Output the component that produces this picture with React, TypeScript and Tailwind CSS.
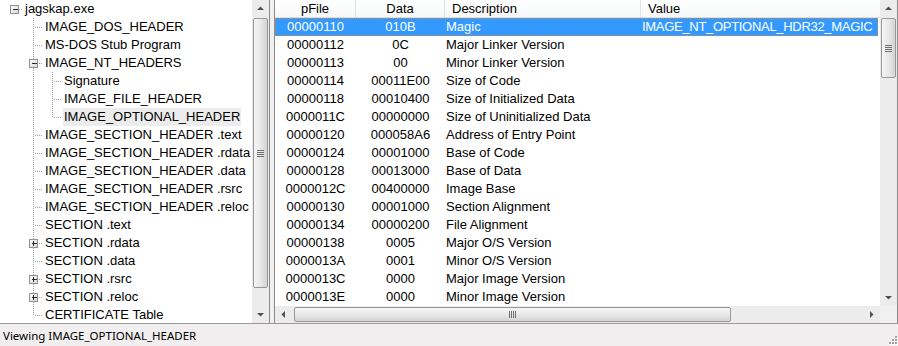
import React from 'react';

type Node = { label: string; level: 0 | 1 | 2; box?: 'minus' | 'plus'; last?: boolean; selected?: boolean };

const tree: Node[] = [
  { label: 'jagskap.exe', level: 0, box: 'minus' },
  { label: 'IMAGE_DOS_HEADER', level: 1 },
  { label: 'MS-DOS Stub Program', level: 1 },
  { label: 'IMAGE_NT_HEADERS', level: 1, box: 'minus' },
  { label: 'Signature', level: 2 },
  { label: 'IMAGE_FILE_HEADER', level: 2 },
  { label: 'IMAGE_OPTIONAL_HEADER', level: 2, last: true, selected: true },
  { label: 'IMAGE_SECTION_HEADER .text', level: 1 },
  { label: 'IMAGE_SECTION_HEADER .rdata', level: 1 },
  { label: 'IMAGE_SECTION_HEADER .data', level: 1 },
  { label: 'IMAGE_SECTION_HEADER .rsrc', level: 1 },
  { label: 'IMAGE_SECTION_HEADER .reloc', level: 1 },
  { label: 'SECTION .text', level: 1 },
  { label: 'SECTION .rdata', level: 1, box: 'plus' },
  { label: 'SECTION .data', level: 1 },
  { label: 'SECTION .rsrc', level: 1, box: 'plus' },
  { label: 'SECTION .reloc', level: 1, box: 'plus' },
  { label: 'CERTIFICATE Table', level: 1, last: true },
];

const rows = [
  ['00000110', '010B', 'Magic', 'IMAGE_NT_OPTIONAL_HDR32_MAGIC'],
  ['00000112', '0C', 'Major Linker Version', ''],
  ['00000113', '00', 'Minor Linker Version', ''],
  ['00000114', '00011E00', 'Size of Code', ''],
  ['00000118', '00010400', 'Size of Initialized Data', ''],
  ['0000011C', '00000000', 'Size of Uninitialized Data', ''],
  ['00000120', '000058A6', 'Address of Entry Point', ''],
  ['00000124', '00001000', 'Base of Code', ''],
  ['00000128', '00013000', 'Base of Data', ''],
  ['0000012C', '00400000', 'Image Base', ''],
  ['00000130', '00001000', 'Section Alignment', ''],
  ['00000134', '00000200', 'File Alignment', ''],
  ['00000138', '0005', 'Major O/S Version', ''],
  ['0000013A', '0001', 'Minor O/S Version', ''],
  ['0000013C', '0000', 'Major Image Version', ''],
  ['0000013E', '0000', 'Minor Image Version', ''],
];

const DOT = '#a0a0a0';

function ExpandBox({ cx, kind }: { cx: number; kind: 'minus' | 'plus' }) {
  return (
    <g>
      <defs>
        <linearGradient id="bx" x1="0" y1="0" x2="1" y2="1">
          <stop offset="0" stopColor="#ffffff" />
          <stop offset="1" stopColor="#d6d6d6" />
        </linearGradient>
      </defs>
      <rect x={cx - 3.5} y={5.5} width={8} height={8} fill="url(#bx)" stroke="#919191" />
      <line x1={cx - 1} y1={9.5} x2={cx + 4} y2={9.5} stroke="#2b2b2b" />
      {kind === 'plus' && <line x1={cx + 0.5} y1={7} x2={cx + 0.5} y2={12} stroke="#2b2b2b" />}
    </g>
  );
}

// tree connector lines for one row
function Gutter({ node }: { node: Node }) {
  const w = [23, 43, 62][node.level];
  return (
    <svg width={w} height={18} className="shrink-0">
      {node.level === 0 && (
        <>
          <line x1={19} y1={9.5} x2={23} y2={9.5} stroke={DOT} strokeDasharray="1 1" />
          {node.box && <ExpandBox cx={14} kind={node.box} />}
        </>
      )}
      {node.level === 1 && (
        <>
          <line x1={33.5} y1={0} x2={33.5} y2={node.last ? 10 : 18} stroke={DOT} strokeDasharray="1 1" />
          <line x1={35} y1={9.5} x2={43} y2={9.5} stroke={DOT} strokeDasharray="1 1" />
          {node.box && <ExpandBox cx={33} kind={node.box} />}
        </>
      )}
      {node.level === 2 && (
        <>
          <line x1={33.5} y1={0} x2={33.5} y2={18} stroke={DOT} strokeDasharray="1 1" />
          <line x1={52.5} y1={0} x2={52.5} y2={node.last ? 10 : 18} stroke={DOT} strokeDasharray="1 1" />
          <line x1={54} y1={9.5} x2={62} y2={9.5} stroke={DOT} strokeDasharray="1 1" />
        </>
      )}
    </svg>
  );
}

function Arrow({ dir }: { dir: 'up' | 'down' | 'left' | 'right' }) {
  const pts = {
    up: '1,5 8,5 4.5,1.5',
    down: '1,2 8,2 4.5,5.5',
    left: '5,1 5,8 1.5,4.5',
    right: '2,1 2,8 5.5,4.5',
  }[dir];
  const vert = dir === 'up' || dir === 'down';
  return (
    <svg width={vert ? 9 : 7} height={vert ? 7 : 9}>
      <polygon points={pts} fill="#505050" />
    </svg>
  );
}

function VGrip() {
  return (
    <div className="flex flex-col gap-[1px]">
      <div className="w-[7px] h-[1px] bg-[#6f6f6f]" />
      <div className="w-[7px] h-[1px] bg-[#6f6f6f]" />
      <div className="w-[7px] h-[1px] bg-[#6f6f6f]" />
      <div className="w-[7px] h-[1px] bg-[#6f6f6f]" />
    </div>
  );
}

function HGrip() {
  return (
    <div className="flex gap-[1px]">
      <div className="h-[7px] w-[1px] bg-[#6f6f6f]" />
      <div className="h-[7px] w-[1px] bg-[#6f6f6f]" />
      <div className="h-[7px] w-[1px] bg-[#6f6f6f]" />
      <div className="h-[7px] w-[1px] bg-[#6f6f6f]" />
    </div>
  );
}

function TreeScroll() {
  return (
    <div className="w-[17px] h-full flex flex-col bg-[#ececec]">
      <div className="h-[17px] flex items-center justify-center"><Arrow dir="up" /></div>
      <div className="flex-1 pt-[1px]">
        <div className="h-[270px] mx-[1px] rounded-[2px] border border-[#979797] bg-linear-to-r from-[#f5f5f5] via-[#e8e8e8] to-[#d4d4d4] flex items-center justify-center">
          <VGrip />
        </div>
      </div>
      <div className="h-[17px] flex items-center justify-center"><Arrow dir="down" /></div>
    </div>
  );
}

function ListVScroll() {
  return (
    <div className="w-[17px] h-full flex flex-col bg-[#ececec]">
      <div className="h-[17px] flex items-center justify-center"><Arrow dir="up" /></div>
      <div className="flex-1 pt-[1px]">
        <div className="h-[60px] mx-[1px] rounded-[2px] border border-[#979797] bg-linear-to-r from-[#f5f5f5] via-[#e8e8e8] to-[#d4d4d4] flex items-center justify-center">
          <VGrip />
        </div>
      </div>
      <div className="h-[17px] flex items-center justify-center"><Arrow dir="down" /></div>
    </div>
  );
}

function ListHScroll() {
  return (
    <div className="flex-1 h-full flex bg-[#ececec]">
      <div className="w-[17px] flex items-center justify-center"><Arrow dir="left" /></div>
      <div className="flex-1 pl-[2px] py-[1px]">
        <div className="w-[437px] h-full rounded-[2px] border border-[#979797] bg-linear-to-b from-[#f5f5f5] via-[#e8e8e8] to-[#d4d4d4] flex items-center justify-center">
          <HGrip />
        </div>
      </div>
      <div className="w-[17px] flex items-center justify-center"><Arrow dir="right" /></div>
    </div>
  );
}

function SizeGrip() {
  const dots = [
    [9, 1], [9, 4], [6, 4], [9, 7], [6, 7], [3, 7],
  ];
  return (
    <svg width={12} height={10}>
      {dots.map(([x, y], i) => (
        <g key={i}>
          <rect x={x + 1} y={y + 1} width={2} height={2} fill="#ffffff" />
          <rect x={x} y={y} width={2} height={2} fill="#a7a3a3" />
        </g>
      ))}
    </svg>
  );
}

export default function App() {
  return (
    <div className="w-[898px] h-[346px] flex flex-col bg-[#f0eeee] text-black text-[13px] font-['Liberation_Sans',Arial,sans-serif] overflow-hidden">
      {/* Panes */}
      <div className="h-[324px] flex bg-[#f0f0f0] border-b border-[#9a9a9a]">
        {/* Tree view */}
        <div className="w-[270px] flex border-r border-[#8c8c8c] bg-white">
          <div className="flex-1 overflow-hidden">
            {tree.map((n) => (
              <div key={n.label} className="h-[18px] flex items-center whitespace-nowrap">
                <Gutter node={n} />
                <span className={`px-[1px] ml-[1px] leading-[18px] ${n.selected ? 'bg-[#ececec]' : ''}`}>{n.label}</span>
              </div>
            ))}
          </div>
          <TreeScroll />
        </div>

        {/* Splitter */}
        <div className="w-[4px] bg-[#f0f0f0]" />

        {/* List view */}
        <div className="flex-1 flex flex-col border-l border-r border-[#8c8c8c] bg-white">
          <div className="h-[306px] flex">
            <div className="flex-1 overflow-hidden">
              <div className="h-[18px] flex border-b border-[#dcdcdc] bg-linear-to-b from-white to-[#f7f8f9] whitespace-nowrap leading-[17px]">
                <div className="w-[81px] shrink-0 text-center border-r border-[#e3e3e3]">pFile</div>
                <div className="w-[89px] shrink-0 text-center border-r border-[#e3e3e3]">Data</div>
                <div className="w-[196px] shrink-0 pl-[7px] border-r border-[#e3e3e3]">Description</div>
                <div className="w-[238px] shrink-0 pl-[7px]">Value</div>
              </div>
              {rows.map((r, i) => (
                <div
                  key={r[0]}
                  className={`h-[18px] w-[603px] flex items-center whitespace-nowrap leading-[18px] ${
                    i === 0 ? 'bg-[#3399ff] text-white outline-1 outline-dotted outline-[#c98a4a] -outline-offset-1' : ''
                  }`}
                >
                  <div className="w-[81px] shrink-0 text-center">{r[0]}</div>
                  <div className="w-[89px] shrink-0 text-center">{r[1]}</div>
                  <div className="w-[196px] shrink-0 pl-[1px]">{r[2]}</div>
                  <div className="w-[237px] shrink-0 pl-[1px] tracking-[-0.3px]">{r[3]}</div>
                </div>
              ))}
            </div>
            <ListVScroll />
          </div>
          <div className="h-[17px] flex">
            <ListHScroll />
            <div className="w-[17px] bg-[#f0f0f0]" />
          </div>
        </div>
      </div>

      {/* Status bar */}
      <div className="flex-1 flex items-center justify-between pl-[3px] pt-[2px] font-['Noto_Sans','Open_Sans',sans-serif] text-[11.5px] text-black">
        <span>Viewing IMAGE_OPTIONAL_HEADER</span>
        <div className="self-end pb-[1px]">
          <SizeGrip />
        </div>
      </div>
    </div>
  );
}
